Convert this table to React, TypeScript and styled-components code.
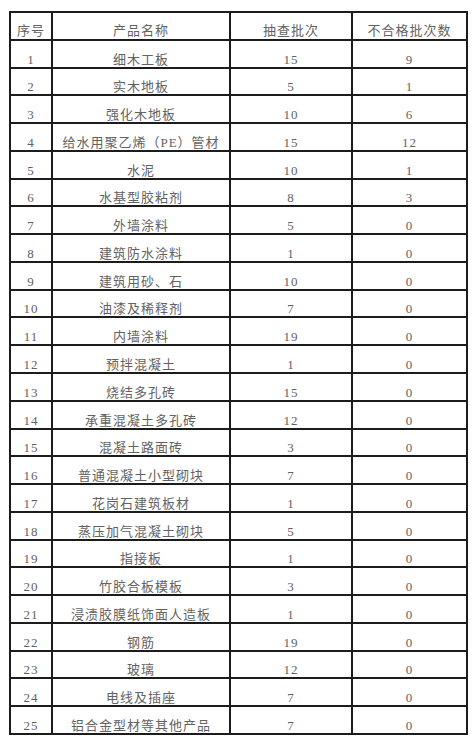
import React from "react";
import styled, { createGlobalStyle } from "styled-components";

const GlobalStyle = createGlobalStyle`
  html, body {
    margin: 0;
    padding: 0;
    background: #ffffff;
  }
`;

const Page = styled.div`
  padding: 11px 0 0 9px;
  width: 474px;
  height: 746px;
  box-sizing: border-box;
`;

const Table = styled.div`
  display: grid;
  grid-template-columns: 40px 176px 120px 113px;
  grid-template-rows: repeat(26, 1fr);
  gap: 2px;
  padding: 2px;
  width: 459px;
  height: 724px;
  box-sizing: border-box;
  background: #1c1c1c;
`;

const Cell = styled.div<{ $header?: boolean }>`
  display: flex;
  align-items: flex-end;
  justify-content: center;
  background: #ffffff;
  padding-bottom: ${(p) => (p.$header ? "1px" : "0")};
  font-family: "Liberation Serif", "Noto Sans CJK SC", serif;
  font-size: 13px;
  line-height: 14px;
  letter-spacing: 1px;
  color: #626262;
  white-space: nowrap;
`;

const headers = ["序号", "产品名称", "抽查批次", "不合格批次数"];

const rows: [string, number, number][] = [
  ["细木工板", 15, 9],
  ["实木地板", 5, 1],
  ["强化木地板", 10, 6],
  ["给水用聚乙烯（PE）管材", 15, 12],
  ["水泥", 10, 1],
  ["水基型胶粘剂", 8, 3],
  ["外墙涂料", 5, 0],
  ["建筑防水涂料", 1, 0],
  ["建筑用砂、石", 10, 0],
  ["油漆及稀释剂", 7, 0],
  ["内墙涂料", 19, 0],
  ["预拌混凝土", 1, 0],
  ["烧结多孔砖", 15, 0],
  ["承重混凝土多孔砖", 12, 0],
  ["混凝土路面砖", 3, 0],
  ["普通混凝土小型砌块", 7, 0],
  ["花岗石建筑板材", 1, 0],
  ["蒸压加气混凝土砌块", 5, 0],
  ["指接板", 1, 0],
  ["竹胶合板模板", 3, 0],
  ["浸渍胶膜纸饰面人造板", 1, 0],
  ["钢筋", 19, 0],
  ["玻璃", 12, 0],
  ["电线及插座", 7, 0],
  ["铝合金型材等其他产品", 7, 0],
];

export default function App() {
  return (
    <Page>
      <GlobalStyle />
      <Table>
        {headers.map((h) => (
          <Cell key={h} $header>
            {h}
          </Cell>
        ))}
        {rows.map(([name, checked, failed], i) => (
          <React.Fragment key={name}>
            <Cell>{i + 1}</Cell>
            <Cell>{name}</Cell>
            <Cell>{checked}</Cell>
            <Cell>{failed}</Cell>
          </React.Fragment>
        ))}
      </Table>
    </Page>
  );
}
